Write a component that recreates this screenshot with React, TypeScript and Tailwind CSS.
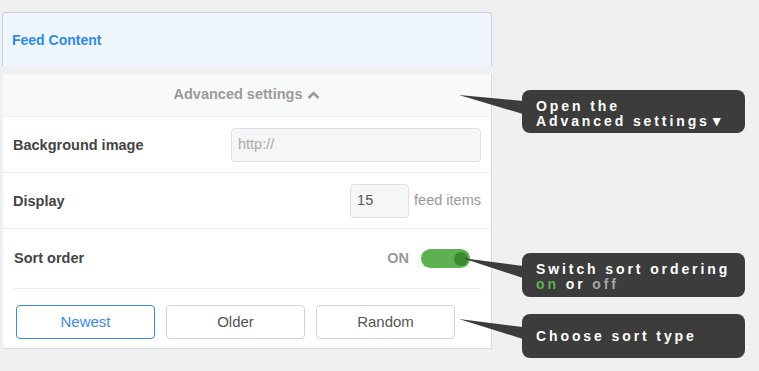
import React from "react";

const font = { fontFamily: '"Liberation Sans", Arial, sans-serif' };

const Callout: React.FC<{ className: string; children: React.ReactNode }> = ({ className, children }) => (
  <div
    className={`absolute left-[522px] w-[223px] rounded-[8px] bg-[#3c3c3c] pl-[14px] text-[14px] leading-[15px] font-bold tracking-[2.9px] text-white ${className}`}
  >
    {children}
  </div>
);

const SettingRow: React.FC<{ label: string; children: React.ReactNode }> = ({ label, children }) => (
  <div className="flex h-[56px] items-center justify-between border-b border-[#eceef0] pl-[10px] pr-[10px]">
    <span className="pt-[3px] text-[14.5px] font-bold text-[#444]">{label}</span>
    {children}
  </div>
);

export default function App() {
  const sortTypes = ["Newest", "Older", "Random"];

  return (
    <div className="relative h-[371px] w-[759px] overflow-hidden bg-[#eff0f2]" style={font}>
      <div className="ml-[2px] w-[490px] pt-[12px]">
        {/* feed content header card */}
        <div className="flex h-[54px] items-center rounded-t-[3px] border border-b-0 border-[#c9cdd2] bg-[#eff6fe] pl-[9px] pt-[2px]">
          <span className="text-[14px] font-bold text-[#2f8ae5]">Feed Content</span>
        </div>

        <div className="ml-[1px] mt-[8px] w-[489px] border-b border-r border-[#d7dade] bg-white">
          <div className="flex h-[43px] items-center justify-center border-b border-[#eceef0] bg-[#f8f9f9]">
            <span className="text-[14.5px] font-bold text-[#9b9b9b]">Advanced settings</span>
            <svg width="13" height="10" viewBox="0 0 13 10" className="ml-[5px]">
              <path d="M1.5 8 L6.5 3 L11.5 8" fill="none" stroke="#9b9b9b" strokeWidth="2.6" />
            </svg>
          </div>

          <SettingRow label="Background image">
            <div className="flex h-[34px] w-[250px] items-center rounded-[4px] border border-[#dcdfe3] bg-[#f5f6f8] px-[6px] text-[14.5px] text-[#aaa]">
              http://
            </div>
          </SettingRow>

          <SettingRow label="Display">
            <div className="flex items-center">
              <div className="flex h-[34px] w-[59px] items-center rounded-[4px] border border-[#dcdfe3] bg-[#f5f6f8] px-[6px] text-[14.5px] text-[#555]">
                15
              </div>
              <span className="ml-[5px] text-[14.5px] text-[#999]">feed items</span>
            </div>
          </SettingRow>

          <div className="mx-[10px] flex h-[60px] items-center justify-between border-b border-[#eceef0] pl-[1px] pr-[11px]">
            <span className="text-[14.5px] font-bold text-[#444]">Sort order</span>
            <div className="flex items-center">
              <span className="mr-[12px] text-[14.5px] font-bold text-[#999]">ON</span>
              <div className="flex h-[19px] w-[49px] items-center justify-end rounded-full bg-[#5db151] pr-[2px]">
                <div className="h-[14px] w-[14px] rounded-full bg-[#3a8a2f]" />
              </div>
            </div>
          </div>

          <div className="flex gap-[11px] pb-[9px] pl-[13px] pt-[16px]">
            {sortTypes.map((t, i) => (
              <button
                key={t}
                className={`h-[34px] w-[139px] rounded-[4px] border bg-white pt-[1px] text-[15px] ${
                  i === 0 ? "border-[#3d8ae6] text-[#3d8ae6]" : "border-[#d2d5d9] text-[#555]"
                }`}
              >
                {t}
              </button>
            ))}
          </div>
        </div>
      </div>

      {/* callout pointers */}
      <svg className="absolute left-0 top-0" width="759" height="371">
        <polygon points="459,95 523,101 523,114" fill="#3c3c3c" />
        <polygon points="462,258 523,266 523,278" fill="#3c3c3c" />
        <polygon points="459,319 523,327 523,339" fill="#3c3c3c" />
      </svg>

      <Callout className="top-[90px] h-[43px] pt-[9px]">
        <div>Open the</div>
        <div>Advanced settings▼</div>
      </Callout>

      <Callout className="top-[253px] h-[44px] pt-[9px]">
        <div>Switch sort ordering</div>
        <div>
          <span className="text-[#5db151]">on</span> or <span className="text-[#a5a5a5]">off</span>
        </div>
      </Callout>

      <Callout className="top-[314px] flex h-[44px] items-center">
        <div>Choose sort type</div>
      </Callout>
    </div>
  );
}
